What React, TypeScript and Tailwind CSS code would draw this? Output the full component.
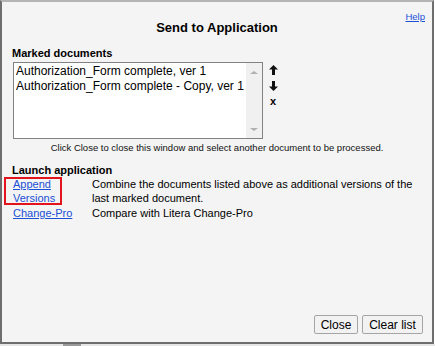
import React from 'react';

const docs = [
  'Authorization_Form complete, ver 1',
  'Authorization_Form complete - Copy, ver 1',
];

const apps = [
  {
    name: ['Append', 'Versions'],
    desc: ['Combine the documents listed above as additional versions of the', 'last marked document.'],
    marked: true,
  },
  { name: ['Change-Pro'], desc: ['Compare with Litera Change-Pro'], marked: false },
];

const ArrowUp = () => (
  <svg width="9" height="10" viewBox="0 0 9 10">
    <path d="M4.5 0 L9 4.5 L6 4.5 L6 10 L3 10 L3 4.5 L0 4.5 Z" fill="#111" />
  </svg>
);

const ArrowDown = () => (
  <svg width="9" height="10" viewBox="0 0 9 10">
    <path d="M4.5 10 L9 5.5 L6 5.5 L6 0 L3 0 L3 5.5 L0 5.5 Z" fill="#111" />
  </svg>
);

const App: React.FC = () => {
  return (
    <div
      className="w-[435px] h-[346px] bg-white flex flex-col text-black"
      style={{ fontFamily: '"Liberation Sans", Arial, sans-serif' }}
    >
      <div className="w-[434px] h-[344px] flex flex-col bg-[#f4f4f4] border-2 border-l-[#6e6e6e] border-r-[#6e6e6e] border-b-[#6e6e6e] border-t-[#b4b4b4]">
        {/* Header */}
        <div className="flex justify-end pr-[7px] pt-[9px] h-[18px]">
          <a href="#" className="text-[9.5px] leading-[11px] text-[#1a4fd6] underline">
            Help
          </a>
        </div>
        <h1 className="text-center text-[13px] leading-[16px] font-bold">
          Send to Application
        </h1>

        {/* Marked documents */}
        <div className="pl-[10px] mt-[11px] text-[11px] leading-[13px] font-bold">
          Marked documents
        </div>
        <div className="flex pl-[11px] mt-[2px]">
          <div className="w-[250px] h-[77px] shrink-0 bg-white border border-[#828282] flex">
            <div className="flex-1 min-w-0 pl-[2px] pt-[1px] text-[12px] leading-[15px]">
              {docs.map((d, i) => (
                <div key={i} className="whitespace-nowrap">
                  {d}
                </div>
              ))}
            </div>
            <div className="w-[16px] bg-[#f0f0f0] flex flex-col justify-between items-center pt-[8px] pb-[7px]">
              <span className="w-0 h-0 border-l-[4px] border-r-[4px] border-b-[3px] border-l-transparent border-r-transparent border-b-[#b0b0b0]" />
              <span className="w-0 h-0 border-l-[4px] border-r-[4px] border-t-[3px] border-l-transparent border-r-transparent border-t-[#b0b0b0]" />
            </div>
          </div>
          <div className="flex flex-col items-center ml-[5px] pt-[3px] w-[10px] gap-[6px]">
            <ArrowUp />
            <ArrowDown />
            <span className="text-[11px] leading-[9px] font-bold">x</span>
          </div>
        </div>
        <p className="text-center text-[9.5px] leading-[12px] mt-[3px] text-[#111]">
          Click Close to close this window and select another document to be processed.
        </p>

        {/* Launch application */}
        <div className="pl-[10px] mt-[10px] text-[11px] leading-[13px] font-bold">
          Launch application
        </div>
        <div className="pl-[11px] pr-[6px] text-[11px] leading-[14px] flex flex-col gap-[1px]">
          {apps.map((a, i) => (
            <div key={i} className="grid grid-cols-[79px_1fr] relative">
              <div>
                {a.name.map((n, j) => (
                  <div key={j}>
                    <a href="#" className="text-[#1a4fd6] underline">
                      {n}
                    </a>
                  </div>
                ))}
              </div>
              <div className="whitespace-nowrap">
                {a.desc.map((d, j) => (
                  <div key={j}>{d}</div>
                ))}
              </div>
              {a.marked && (
                <div className="absolute left-[-9px] top-0 w-[58px] h-[28px] border-2 border-[#e3141c]" />
              )}
            </div>
          ))}
        </div>

        {/* Buttons */}
        <div className="flex-1" />
        <div className="flex justify-end gap-[4px] pr-[9px] pb-[8px]">
          <button className="h-[19px] w-[44px] text-[12px] leading-[14px] bg-[#f2f2f2] border border-[#a5a5a5] rounded-[2px]">
            Close
          </button>
          <button className="h-[19px] w-[61px] text-[12px] leading-[14px] bg-[#f2f2f2] border border-[#a5a5a5] rounded-[2px]">
            Clear list
          </button>
        </div>
      </div>
      <div className="h-[2px] bg-[#e6e6e6] flex">
        <div className="ml-[63px] w-[18px] bg-[#9a9a9a]" />
      </div>
    </div>
  );
};

export default App;
